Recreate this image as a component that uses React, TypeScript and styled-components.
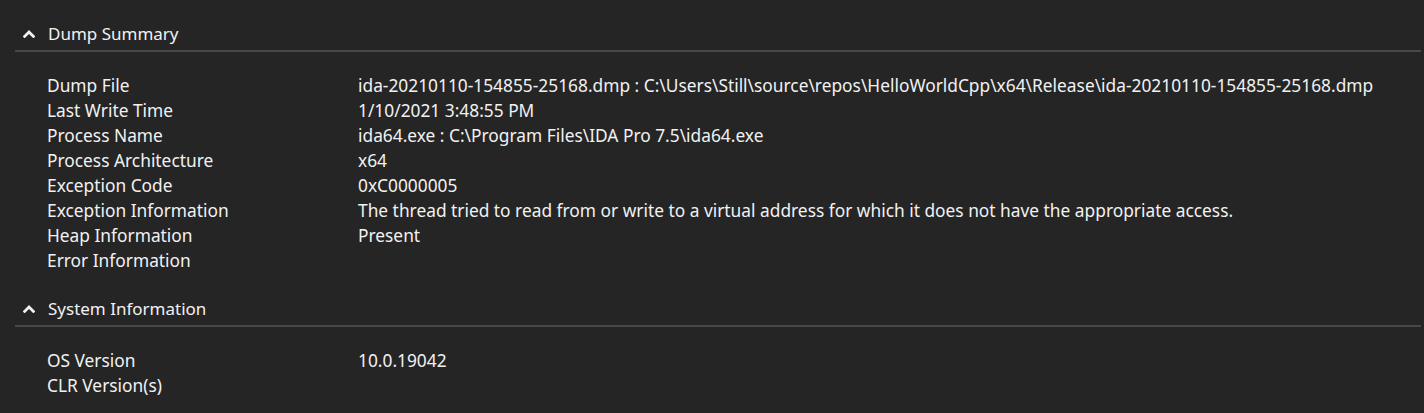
import styled, { createGlobalStyle } from 'styled-components'

const GlobalStyle = createGlobalStyle`
    html, body {
        margin: 0;
        padding: 0;
        background: #252526;
    }
    body {
        font-family: "Noto Sans", "Open Sans", sans-serif;
        color: #f1f1f1;
    }
`

const Page = styled.div`
    width: 1424px;
    height: 413px;
    padding-top: 17px;
    box-sizing: border-box;
    overflow: hidden;
`

const Section = styled.section`
    margin-bottom: 19px;
`

const Header = styled.div`
    display: flex;
    align-items: center;
    height: 33px;
    margin-left: 15px;
    margin-right: 3px;
    padding-left: 8px;
    border-bottom: 2px solid #47474c;
    font-size: 17px;
    color: #f1f1f1;
`

const Chevron = styled.svg`
    width: 12px;
    height: 8px;
    margin-right: 13px;
    margin-top: 0;
`

const Rows = styled.div`
    padding-top: 21px;
    padding-left: 47px;
`

const Row = styled.div`
    display: grid;
    grid-template-columns: 311px 1fr;
    height: 25px;
    line-height: 25px;
    font-size: 17.33px;
    white-space: nowrap;
`

const Label = styled.span`
    color: #f1f1f1;
`

const Value = styled.span`
    color: #f1f1f1;
`

type Item = { label: string; value?: string }

const summary: Item[] = [
    { label: 'Dump File', value: 'ida-20210110-154855-25168.dmp : C:\\Users\\Still\\source\\repos\\HelloWorldCpp\\x64\\Release\\ida-20210110-154855-25168.dmp' },
    { label: 'Last Write Time', value: '1/10/2021 3:48:55 PM' },
    { label: 'Process Name', value: 'ida64.exe : C:\\Program Files\\IDA Pro 7.5\\ida64.exe' },
    { label: 'Process Architecture', value: 'x64' },
    { label: 'Exception Code', value: '0xC0000005' },
    { label: 'Exception Information', value: 'The thread tried to read from or write to a virtual address for which it does not have the appropriate access.' },
    { label: 'Heap Information', value: 'Present' },
    { label: 'Error Information' },
]

const system: Item[] = [
    { label: 'OS Version', value: '10.0.19042' },
    { label: 'CLR Version(s)' },
]

const Group = (props: { title: string; items: Item[] }) => {
    return (
        <Section>
            <Header>
                <Chevron viewBox="0 0 12 8">
                    <path d="M1.6 6.4 L6 2 L10.4 6.4" fill="none" stroke="#f1f1f1" strokeWidth="2.8" strokeLinecap="square" />
                </Chevron>
                {props.title}
            </Header>
            <Rows>
                {props.items.map((data, index) => (
                    <Row key={index}>
                        <Label>{data.label}</Label>
                        <Value>{data.value ?? ''}</Value>
                    </Row>
                ))}
            </Rows>
        </Section>
    )
}

const App = () => {
    return (
        <Page>
            <GlobalStyle />
            <Group title="Dump Summary" items={summary} />
            <Group title="System Information" items={system} />
        </Page>
    )
}

export default App
